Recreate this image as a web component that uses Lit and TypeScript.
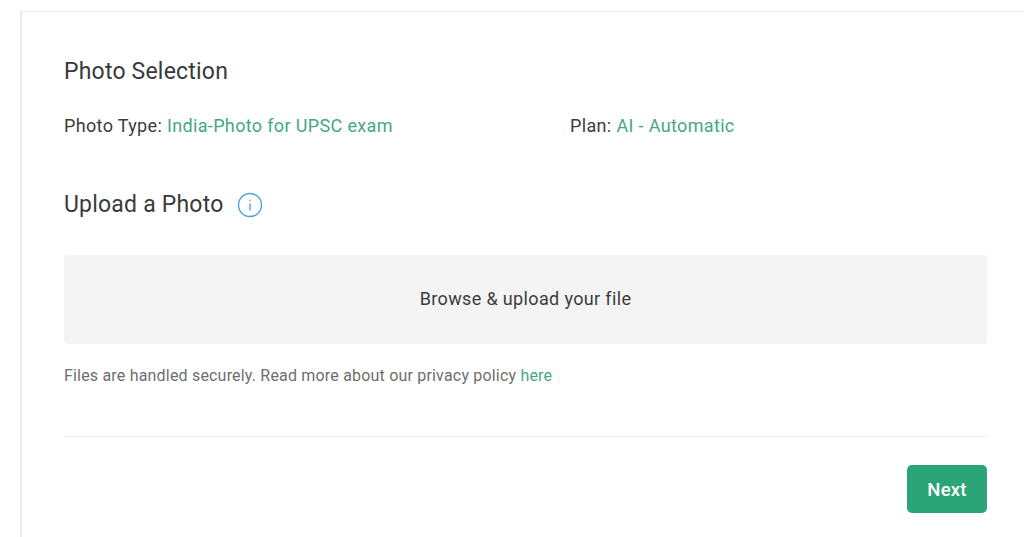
import { LitElement, html, css } from "lit";
import { customElement } from "lit/decorators.js";

@customElement("app-root")
export class AppRoot extends LitElement {
  static styles = css`
    :host { display: block; height: 537px; overflow: hidden; background: #fff; font-family: Roboto, sans-serif; color: #3c3c3c; }
    .card { margin: 11px 0 0 20px; border: 1px solid #ebebeb; border-width: 1px 0 0 2px; padding: 0 37px 0 42px; height: 540px; box-sizing: border-box; }
    h2 { margin: 0; font-size: 23px; font-weight: 400; line-height: 28px; letter-spacing: 0.2px; color: #3a3a3a; }
    .title { padding-top: 46px; }
    .meta { display: flex; margin-top: 28px; font-size: 18px; line-height: 24px; letter-spacing: 0.35px; }
    .meta > div:first-child { width: 506px; }
    .v { color: #45a883; }
    .upload { display: flex; align-items: center; gap: 14px; margin-top: 53px; }
    .drop { margin-top: 36px; height: 89px; background: #f4f4f4; border-radius: 3px; display: flex; align-items: center; justify-content: center; font-size: 18px; letter-spacing: 0.36px; padding-bottom: 2px; box-sizing: border-box; }
    .note { margin: 21px 0 0; font-size: 16px; line-height: 22px; letter-spacing: 0.19px; color: #6e6e6e; }
    .note a { color: #45a883; text-decoration: none; }
    hr { border: none; border-top: 1px solid #f0f0f0; margin: 49px 0 0; }
    .actions { display: flex; justify-content: flex-end; margin-top: 28px; }
    button { width: 80px; height: 48px; border: none; border-radius: 5px; background: #2ba478; color: #fff; font: 500 18.5px Roboto, sans-serif; letter-spacing: 0.2px; padding: 2px 0 0; }
    svg { display: block; }
  `;
  render() {
    return html`<div class="card">
      <h2 class="title">Photo Selection</h2>
      <div class="meta">
        <div>Photo Type: <span class="v">India-Photo for UPSC exam</span></div>
        <div>Plan: <span class="v">AI - Automatic</span></div>
      </div>
      <div class="upload">
        <h2>Upload a Photo</h2>
        <svg width="26" height="26" viewBox="0 0 26 26" fill="none" stroke="#4aa3da" stroke-width="1.4">
          <circle cx="13" cy="13" r="11.5"></circle>
          <path d="M13 11.5V18.5M13 7.5V9"></path>
        </svg>
      </div>
      <div class="drop">Browse &amp; upload your file</div>
      <p class="note">Files are handled securely. Read more about our privacy policy <a>here</a></p>
      <hr />
      <div class="actions"><button>Next</button></div>
    </div>`;
  }
}
